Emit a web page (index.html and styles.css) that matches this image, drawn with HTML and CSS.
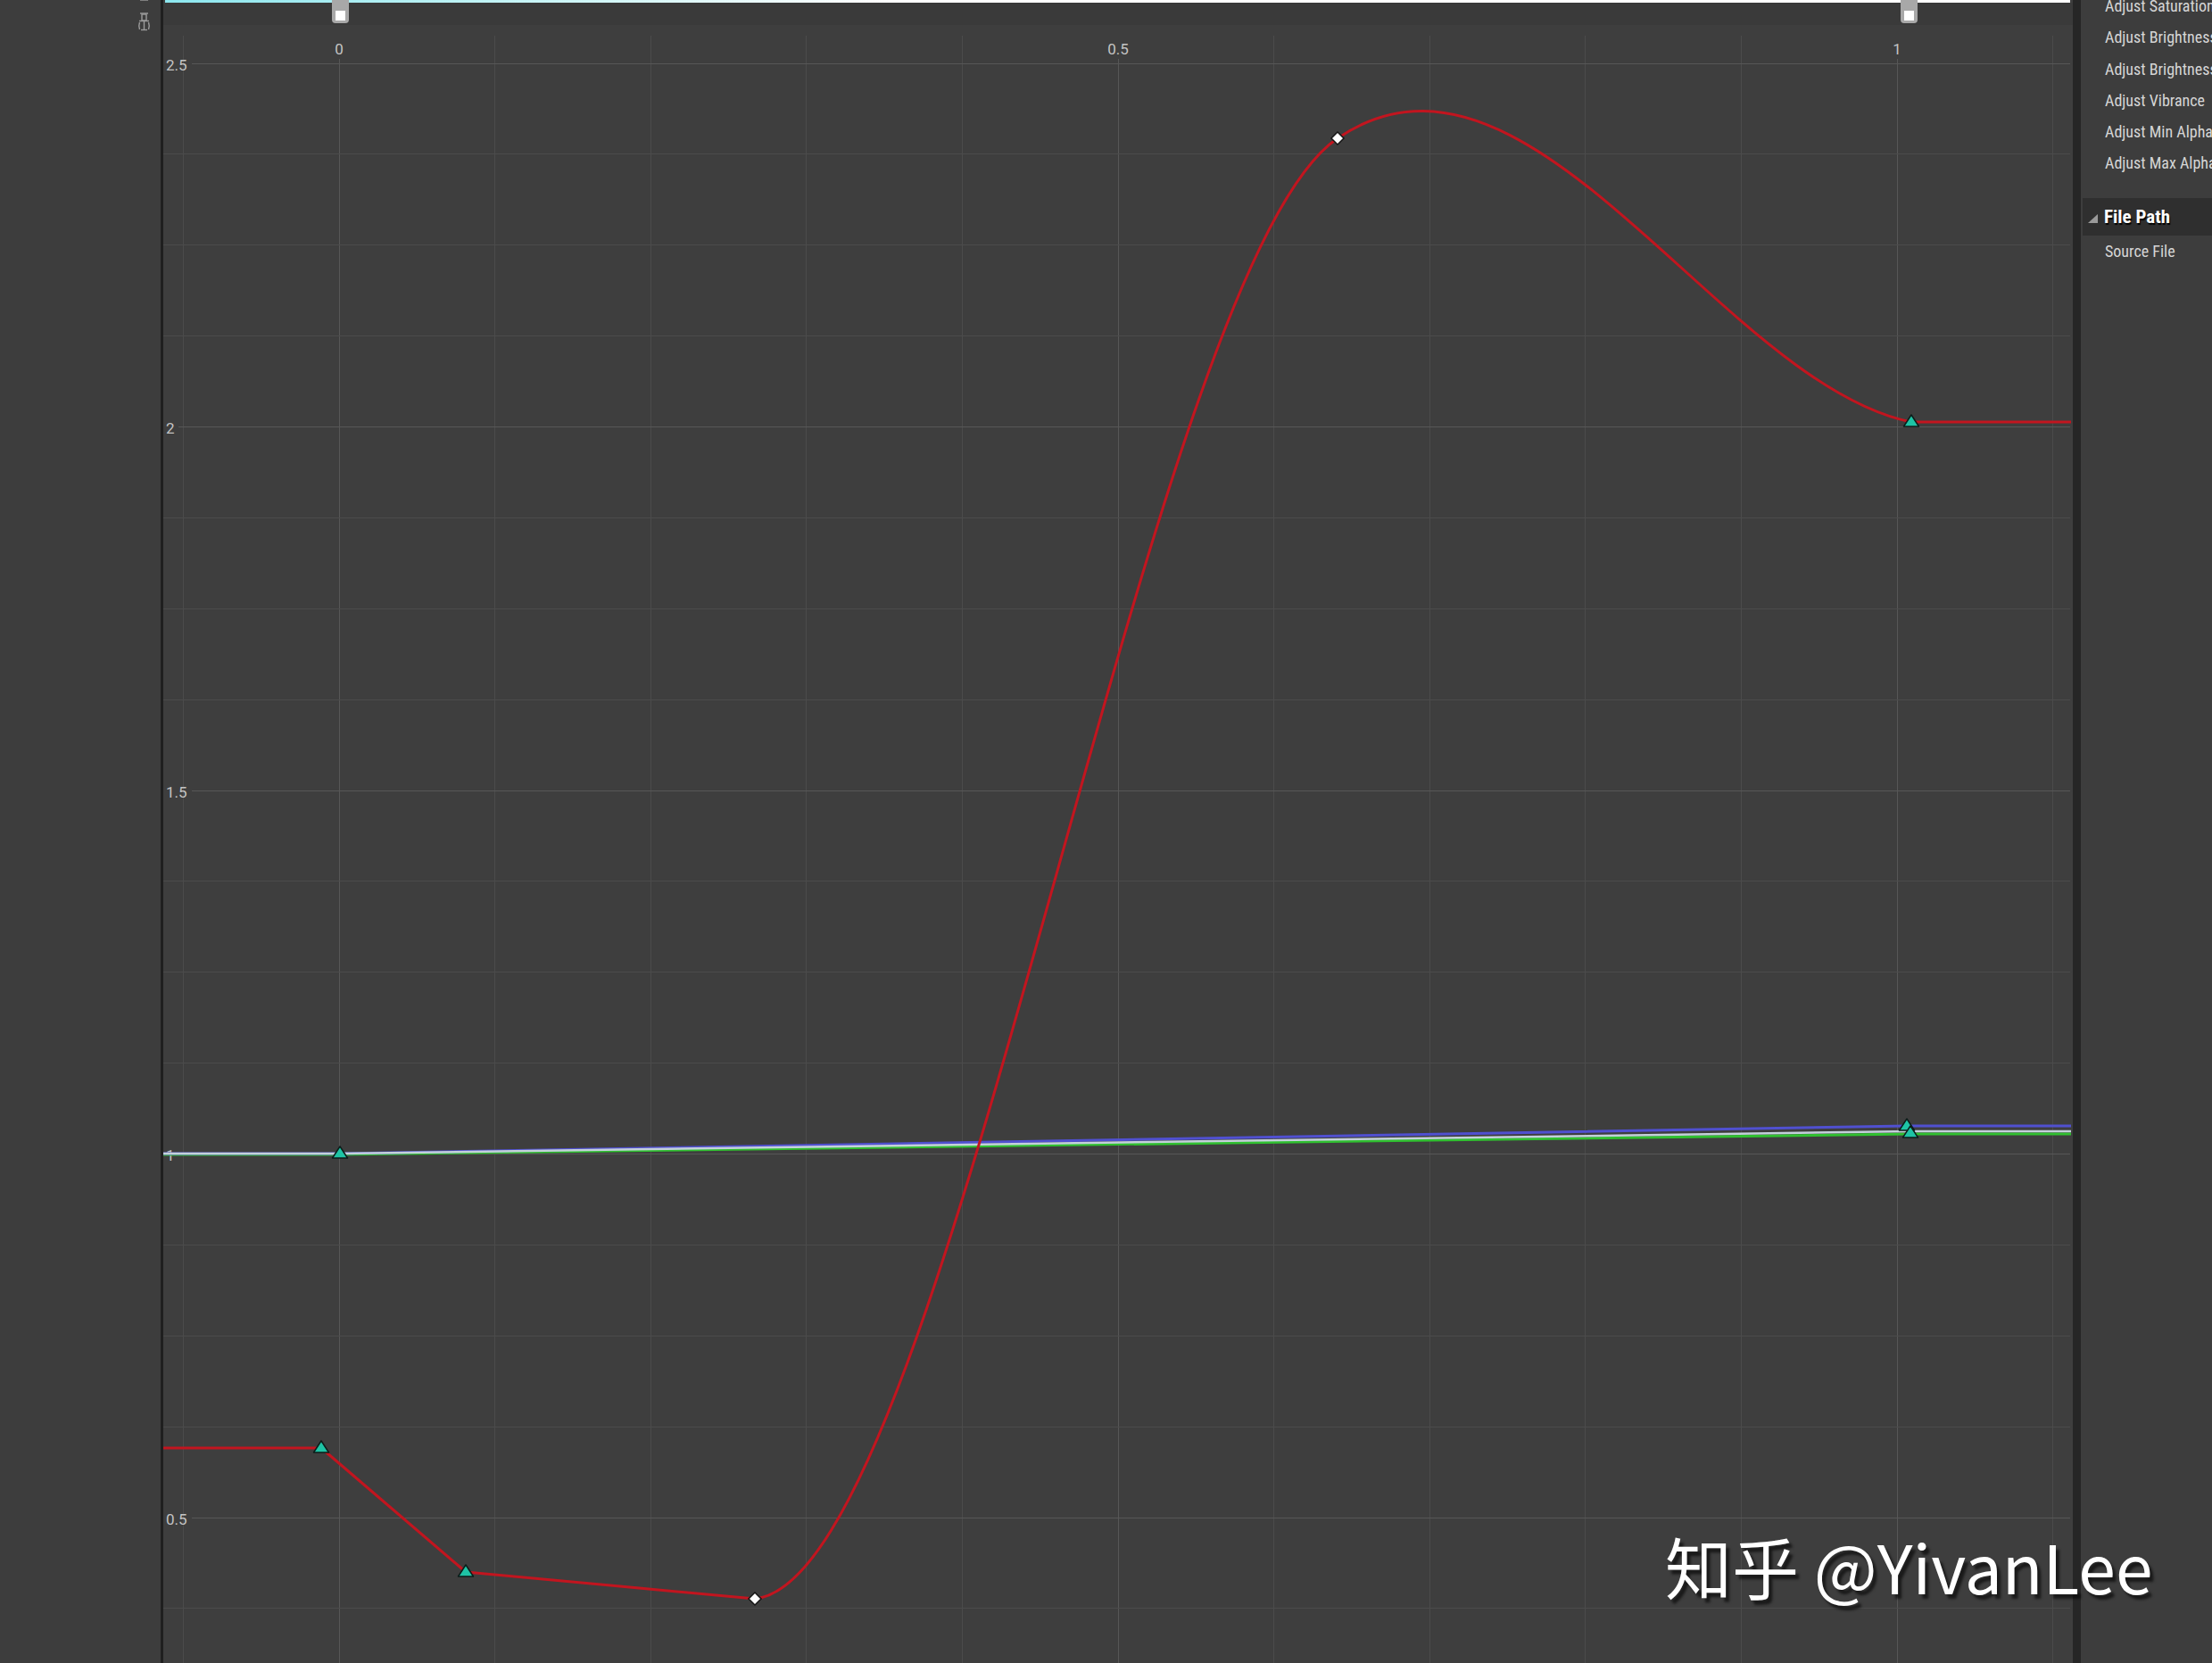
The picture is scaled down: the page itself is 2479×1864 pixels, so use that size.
FILE: index.html
```html
<!DOCTYPE html>
<html>
<head>
  <title>Curve Editor</title>
  <link rel="stylesheet" href="styles.css">
</head>
<body>
  <div class="editor">
    <div class="side-strip">
      <svg class="pin-icon" width="16" height="36" viewBox="0 0 16 36">
        <line x1="3" y1="1" x2="12" y2="1" />
        <line x1="3" y1="16" x2="12" y2="16" />
        <rect x="5" y="17" width="5" height="7" />
        <line x1="2" y1="24.5" x2="13" y2="24.5" />
        <line x1="7.5" y1="25" x2="7.5" y2="34" />
        <line x1="4" y1="34.5" x2="11" y2="34.5" />
        <path d="M2.5 26 Q1 30 2.5 34 M12.5 26 Q14 30 12.5 34" />
      </svg>
    </div>

    <div class="graph">
      <svg class="curve-view" width="2140" height="1864" viewBox="183 0 2140 1864">
        <defs>
          <linearGradient id="timeGrad" x1="0" x2="1" y1="0" y2="0">
            <stop offset="0" stop-color="#8ce6ee" />
            <stop offset="0.18" stop-color="#c4f4f6" />
            <stop offset="0.38" stop-color="#ffffff" />
            <stop offset="1" stop-color="#ffffff" />
          </linearGradient>
        </defs>

        <!-- time range strip -->
        <rect class="time-shade" x="183" y="3" width="2140" height="25" />
        <rect x="185" y="0" width="2135" height="3" fill="url(#timeGrad)" />

        <!-- vertical grid -->
        <g class="grid">
          <line x1="205.5" y1="40" x2="205.5" y2="1864" />
          <line class="major" x1="380.5" y1="66" x2="380.5" y2="1864" />
          <line x1="554.5" y1="40" x2="554.5" y2="1864" />
          <line x1="729.5" y1="40" x2="729.5" y2="1864" />
          <line x1="903.5" y1="40" x2="903.5" y2="1864" />
          <line x1="1078.5" y1="40" x2="1078.5" y2="1864" />
          <line class="major" x1="1253.5" y1="66" x2="1253.5" y2="1864" />
          <line x1="1427.5" y1="40" x2="1427.5" y2="1864" />
          <line x1="1602.5" y1="40" x2="1602.5" y2="1864" />
          <line x1="1776.5" y1="40" x2="1776.5" y2="1864" />
          <line x1="1951.5" y1="40" x2="1951.5" y2="1864" />
          <line class="major" x1="2126.5" y1="66" x2="2126.5" y2="1864" />
          <line x1="2300.5" y1="40" x2="2300.5" y2="1864" />
        </g>

        <!-- horizontal grid -->
        <g class="grid">
          <line class="major" x1="215" y1="71.5" x2="2320" y2="71.5" />
          <line x1="183" y1="172.5" x2="2320" y2="172.5" />
          <line x1="183" y1="274.5" x2="2320" y2="274.5" />
          <line x1="183" y1="376.5" x2="2320" y2="376.5" />
          <line class="major" x1="200" y1="478.5" x2="2320" y2="478.5" />
          <line x1="183" y1="580.5" x2="2320" y2="580.5" />
          <line x1="183" y1="682.5" x2="2320" y2="682.5" />
          <line x1="183" y1="784.5" x2="2320" y2="784.5" />
          <line class="major" x1="215" y1="886.5" x2="2320" y2="886.5" />
          <line x1="183" y1="987.5" x2="2320" y2="987.5" />
          <line x1="183" y1="1089.5" x2="2320" y2="1089.5" />
          <line x1="183" y1="1191.5" x2="2320" y2="1191.5" />
          <line class="major" x1="198" y1="1293.5" x2="2320" y2="1293.5" />
          <line x1="183" y1="1395.5" x2="2320" y2="1395.5" />
          <line x1="183" y1="1497.5" x2="2320" y2="1497.5" />
          <line x1="183" y1="1599.5" x2="2320" y2="1599.5" />
          <line class="major" x1="215" y1="1701.5" x2="2320" y2="1701.5" />
          <line x1="183" y1="1802.5" x2="2320" y2="1802.5" />
        </g>

        <!-- axis labels -->
        <g class="axis-label">
          <text x="380" y="61" text-anchor="middle">0</text>
          <text x="1253" y="61" text-anchor="middle">0.5</text>
          <text x="2126" y="61" text-anchor="middle">1</text>
          <text x="186" y="79">2.5</text>
          <text x="186" y="486">2</text>
          <text x="186" y="894">1.5</text>
          <text x="186" y="1301">1</text>
          <text x="186" y="1709">0.5</text>
        </g>

        <!-- scrub handles -->
        <g class="handle">
          <rect x="372" y="-4" width="19" height="30" rx="4" />
          <rect class="handle-dot" x="376" y="12" width="11" height="11" />
          <rect x="2130" y="-4" width="19" height="30" rx="4" />
          <rect class="handle-dot" x="2134" y="12" width="11" height="11" />
        </g>

        <!-- curves -->
        <path class="curve curve-green" d="M183 1294 L381 1294 L2141 1271 L2321 1271" />
        <path class="curve curve-blue" d="M183 1293 L381 1293 L2137 1262 L2321 1262" />
        <path class="curve curve-white" d="M183 1293 L381 1293 L2141 1268 L2321 1268" />
        <path class="curve curve-red" d="M183 1623 L360 1623 L522 1762 L846 1792 C1063.7 1770.2, 1281.3 303, 1499 155 C1713.3 9.3, 1927.7 430.1, 2142 473 L2321 473" />

        <!-- keys -->
        <g class="key">
          <polygon points="381,1285 389.5,1298 372.5,1298" />
          <polygon points="360,1615 368.5,1628 351.5,1628" />
          <polygon points="522,1754 530.5,1767 513.5,1767" />
          <polygon points="2142,465 2150.5,478 2133.5,478" />
          <polygon points="2137,1254 2145.5,1267 2128.5,1267" />
          <polygon points="2141,1262 2149.5,1275 2132.5,1275" />
        </g>
        <g class="key-diamond">
          <polygon points="846,1785 853,1792 846,1799 839,1792" />
          <polygon points="1499,148 1506,155 1499,162 1492,155" />
        </g>
      </svg>
    </div>

    <div class="divider"></div>

    <div class="details">
      <div class="prop-list">
        <div class="prop">Adjust Saturation</div>
        <div class="prop">Adjust Brightness</div>
        <div class="prop">Adjust Brightness Curve</div>
        <div class="prop">Adjust Vibrance</div>
        <div class="prop">Adjust Min Alpha</div>
        <div class="prop">Adjust Max Alpha</div>
      </div>
      <div class="category"><span class="arrow"></span>File Path</div>
      <div class="prop">Source File</div>
    </div>
  </div>

  <div class="watermark">知乎 @YivanLee</div>
</body>
</html>
```

FILE: styles.css
```css
body {
  margin: 0;
  width: 2479px;
  height: 1864px;
  overflow: hidden;
  background-color: #3d3d3d;
  font-family: Roboto, "Liberation Sans", sans-serif;
  position: relative;
}

.editor {
  display: flex;
  height: 1864px;
}

/* left tool strip */
.side-strip {
  width: 183px;
  border-right: 3px solid #1f1f1f;
  background-color: #3d3d3d;
  display: flex;
  justify-content: flex-end;
  align-items: flex-start;
  padding-right: 10px;
  box-sizing: border-box;
}

.pin-icon {
  stroke: #9c9c9c;
  stroke-width: 1.4;
  fill: none;
  margin-top: -1px;
}

/* curve graph */
.graph {
  width: 2140px;
  background-color: #3e3e3e;
}

.curve-view {
  display: block;
}

.time-shade {
  fill: #3a3a3a;
}

.grid line {
  stroke: #4b4b4b;
  stroke-width: 1;
}

.grid line.major {
  stroke: #575757;
}

.axis-label text {
  font-family: Roboto, "Liberation Sans", sans-serif;
  font-size: 17px;
  fill: #c4c4c4;
}

.handle rect {
  fill: #a8a8a8;
}

.handle rect.handle-dot {
  fill: #ffffff;
}

.curve {
  fill: none;
  stroke-linejoin: round;
}

.curve-red {
  stroke: #c2151f;
  stroke-width: 3;
}

.curve-green {
  stroke: #30c030;
  stroke-width: 3;
}

.curve-blue {
  stroke: #5050d0;
  stroke-width: 3;
}

.curve-white {
  stroke: #c4d0da;
  stroke-width: 2.5;
}

.key polygon {
  fill: #1ec3a5;
  stroke: #0c1d1a;
  stroke-width: 1.5;
  stroke-linejoin: round;
}

.key-diamond polygon {
  fill: #ffffff;
  stroke: #151515;
  stroke-width: 1.5;
}

.divider {
  width: 9px;
  background-color: #262626;
}

/* details panel */
.details {
  width: 147px;
  overflow: hidden;
  background-color: #3d3d3d;
  font-family: "Liberation Sans Narrow", "Roboto Condensed", Roboto, sans-serif;
  white-space: nowrap;
}

.prop-list {
  margin-top: -11px;
  margin-bottom: 21px;
}

.prop {
  height: 35.3px;
  line-height: 35px;
  padding-left: 27px;
  font-size: 18px;
  color: #d6d6d6;
}

.category {
  height: 42px;
  line-height: 40px;
  margin-left: 2px;
  padding-left: 6px;
  background-color: #2f2f2f;
  color: #ffffff;
  font-size: 21px;
  font-weight: bold;
  text-shadow: 1px 2px 1px #000000;
  display: flex;
  align-items: center;
}

.arrow {
  width: 0;
  height: 0;
  border-left: 11px solid transparent;
  border-bottom: 10px solid #9a9a9a;
  margin-right: 7px;
  margin-top: 4px;
}

.watermark {
  position: absolute;
  left: 1866px;
  top: 1717px;
  font-family: "Noto Sans CJK SC", sans-serif;
  font-size: 75px;
  line-height: 1;
  color: #ffffff;
  text-shadow: 4px 5px 3px rgba(0, 0, 0, 0.6);
  white-space: nowrap;
}
```
